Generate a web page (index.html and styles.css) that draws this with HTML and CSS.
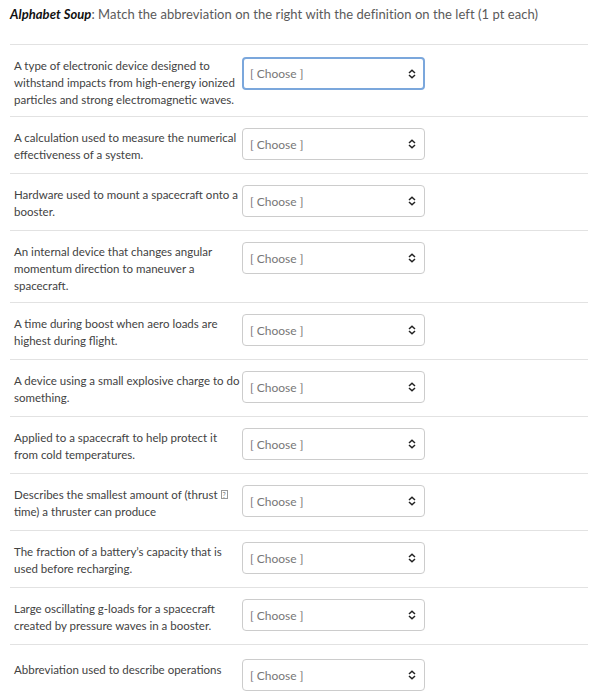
FILE: index.html
```html
<!DOCTYPE html>
<html>
<head>
<meta charset="utf-8">
<link rel="stylesheet" href="styles.css">
</head>
<body>
<div class="page">
  <p class="title"><b><i>Alphabet Soup</i></b>: Match the abbreviation on the right with the definition on the left (1 pt each)</p>
  <div class="list">
    <div class="row r3">
      <div class="def">A type of electronic device designed to withstand impacts from high-energy ionized particles and strong electromagnetic waves.</div>
      <div class="sel focus"><span>[ Choose ]</span><svg viewBox="0 0 8 10" width="8" height="10"><path d="M1 4 L4 1.2 L7 4 M1 6 L4 8.8 L7 6" fill="none" stroke="#222" stroke-width="1.5"/></svg></div>
    </div>
    <div class="row">
      <div class="def">A calculation used to measure the numerical effectiveness of a system.</div>
      <div class="sel"><span>[ Choose ]</span><svg viewBox="0 0 8 10" width="8" height="10"><path d="M1 4 L4 1.2 L7 4 M1 6 L4 8.8 L7 6" fill="none" stroke="#222" stroke-width="1.5"/></svg></div>
    </div>
    <div class="row">
      <div class="def">Hardware used to mount a spacecraft onto a booster.</div>
      <div class="sel"><span>[ Choose ]</span><svg viewBox="0 0 8 10" width="8" height="10"><path d="M1 4 L4 1.2 L7 4 M1 6 L4 8.8 L7 6" fill="none" stroke="#222" stroke-width="1.5"/></svg></div>
    </div>
    <div class="row r3">
      <div class="def">An internal device that changes angular momentum direction to maneuver a spacecraft.</div>
      <div class="sel"><span>[ Choose ]</span><svg viewBox="0 0 8 10" width="8" height="10"><path d="M1 4 L4 1.2 L7 4 M1 6 L4 8.8 L7 6" fill="none" stroke="#222" stroke-width="1.5"/></svg></div>
    </div>
    <div class="row">
      <div class="def">A time during boost when aero loads are highest during flight.</div>
      <div class="sel"><span>[ Choose ]</span><svg viewBox="0 0 8 10" width="8" height="10"><path d="M1 4 L4 1.2 L7 4 M1 6 L4 8.8 L7 6" fill="none" stroke="#222" stroke-width="1.5"/></svg></div>
    </div>
    <div class="row">
      <div class="def">A device using a small explosive charge to do something.</div>
      <div class="sel"><span>[ Choose ]</span><svg viewBox="0 0 8 10" width="8" height="10"><path d="M1 4 L4 1.2 L7 4 M1 6 L4 8.8 L7 6" fill="none" stroke="#222" stroke-width="1.5"/></svg></div>
    </div>
    <div class="row">
      <div class="def">Applied to a spacecraft to help protect it from cold temperatures.</div>
      <div class="sel"><span>[ Choose ]</span><svg viewBox="0 0 8 10" width="8" height="10"><path d="M1 4 L4 1.2 L7 4 M1 6 L4 8.8 L7 6" fill="none" stroke="#222" stroke-width="1.5"/></svg></div>
    </div>
    <div class="row">
      <div class="def">Describes the smallest amount of (thrust <span class="box">?</span> time) a thruster can produce</div>
      <div class="sel"><span>[ Choose ]</span><svg viewBox="0 0 8 10" width="8" height="10"><path d="M1 4 L4 1.2 L7 4 M1 6 L4 8.8 L7 6" fill="none" stroke="#222" stroke-width="1.5"/></svg></div>
    </div>
    <div class="row">
      <div class="def">The fraction of a battery’s capacity that is used before recharging.</div>
      <div class="sel"><span>[ Choose ]</span><svg viewBox="0 0 8 10" width="8" height="10"><path d="M1 4 L4 1.2 L7 4 M1 6 L4 8.8 L7 6" fill="none" stroke="#222" stroke-width="1.5"/></svg></div>
    </div>
    <div class="row">
      <div class="def">Large oscillating g-loads for a spacecraft created by pressure waves in a booster.</div>
      <div class="sel"><span>[ Choose ]</span><svg viewBox="0 0 8 10" width="8" height="10"><path d="M1 4 L4 1.2 L7 4 M1 6 L4 8.8 L7 6" fill="none" stroke="#222" stroke-width="1.5"/></svg></div>
    </div>
    <div class="row last">
      <div class="def">Abbreviation used to describe operations</div>
      <div class="sel"><span>[ Choose ]</span><svg viewBox="0 0 8 10" width="8" height="10"><path d="M1 4 L4 1.2 L7 4 M1 6 L4 8.8 L7 6" fill="none" stroke="#222" stroke-width="1.5"/></svg></div>
    </div>
  </div>
</div>
</body>
</html>
```
FILE: styles.css
```css
html, body {
  margin: 0;
  padding: 0;
  background: #fff;
}
body {
  font-family: Lato, "Open Sans", sans-serif;
  color: #2d3b45;
}
.page {
  width: 578px;
  padding-left: 10px;
}
.title {
  margin: 0;
  padding-top: 6px;
  height: 44px;
  font-size: 13px;
  line-height: 17px;
  color: #5a5a5a;
  box-sizing: border-box;
  letter-spacing: 0.05px;
}
.title b {
  color: #111;
}
.list {
  display: flex;
  flex-direction: column;
}
.row {
  display: flex;
  align-items: flex-start;
  border-top: 1px solid #e2e2e2;
  padding: 11px 0 10px 4px;
}
.row.r3 {
  padding-bottom: 8px;
}
.def {
  width: 226px;
  font-size: 11.5px;
  line-height: 17px;
  color: #424242;
  padding-top: 1px;
}
.row.last .def {
  padding-top: 5px;
}
.row.last .sel {
  margin-top: 3px;
}
.box {
  display: inline-block;
  width: 7px;
  height: 9px;
  border: 1px solid #999;
  font-size: 7px;
  line-height: 9px;
  text-align: center;
  color: #777;
  vertical-align: 1px;
  box-sizing: border-box;
}
.sel {
  margin-left: 2px;
  width: 183px;
  height: 32px;
  box-sizing: border-box;
  border: 1px solid #ccc;
  border-radius: 4px;
  display: flex;
  align-items: center;
  justify-content: space-between;
  padding: 0 8px 0 7px;
  font-size: 12px;
  color: #777;
  background: #fff;
}
.sel.focus {
  border: 2px solid #7ba7dc;
  padding: 0 7px 0 6px;
  height: 33px;
  margin-top: 1px;
}
.sel svg {
  display: block;
}
```
